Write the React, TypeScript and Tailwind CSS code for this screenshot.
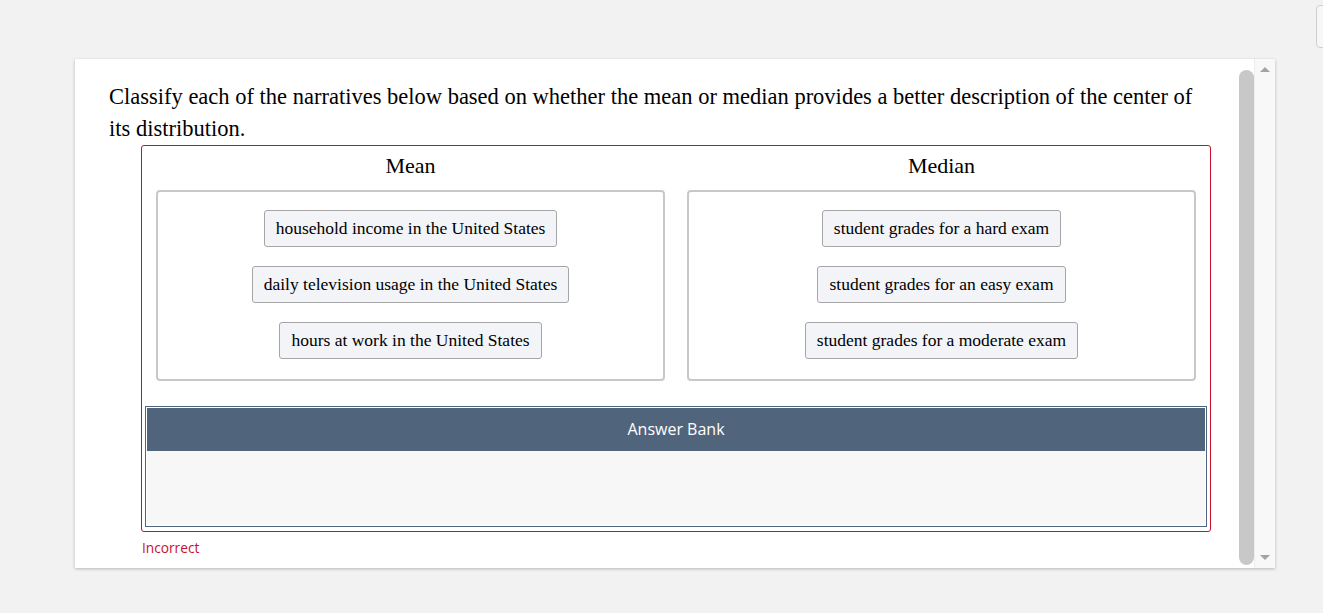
import React from "react";

const serif = { fontFamily: '"Liberation Serif", "Times New Roman", serif' };

function Chip({ text }: { text: string }) {
  return (
    <div className="h-[37px] flex items-center px-[11px] bg-[#f3f4f8] border border-[#a6a6a6] rounded-[3px] text-[17.5px] text-black leading-none">
      {text}
    </div>
  );
}

function Column({ title, items }: { title: string; items: string[] }) {
  return (
    <div className="flex flex-col w-[509px]">
      <div className="h-[44px] flex items-start justify-center pt-[6px] leading-[28px] text-[22px] text-black">{title}</div>
      <div className="h-[191px] border-2 border-[#c8c8c8] rounded-[4px] flex flex-col items-center pt-[18px] gap-[19px]">
        {items.map((t) => (
          <Chip key={t} text={t} />
        ))}
      </div>
    </div>
  );
}

export default function App() {
  return (
    <div className="w-[1323px] h-[613px] bg-[#f2f2f2] relative overflow-hidden">
      <div className="absolute left-[1316px] top-[5px] w-[20px] h-[43px] border border-[#cfcfcf] rounded-[4px] bg-[#f7f7f7]" />
      <div className="pt-[59px] pl-[75px]">
        <div className="w-[1200px] h-[509px] bg-white shadow-[0_1px_3px_rgba(0,0,0,0.25)] flex">
          <div className="flex-1 pl-[34px] pt-[22px]" style={serif}>
            <p className="text-[22.5px] leading-[32px] text-black w-[1095px]">
              Classify each of the narratives below based on whether the mean or median provides a better description of the center of its distribution.
            </p>
            <div className="ml-[32px] w-[1070px] h-[387px] border border-[#c8102e] rounded-[3px] flex flex-col">
              <div className="flex gap-[22px] px-[14px]">
                <Column
                  title="Mean"
                  items={[
                    "household income in the United States",
                    "daily television usage in the United States",
                    "hours at work in the United States",
                  ]}
                />
                <Column
                  title="Median"
                  items={[
                    "student grades for a hard exam",
                    "student grades for an easy exam",
                    "student grades for a moderate exam",
                  ]}
                />
              </div>
              <div
                className="mx-[3px] mt-[25px] h-[121px] border border-[#50647c] p-px flex flex-col"
                style={{ fontFamily: '"Open Sans", "Noto Sans", sans-serif' }}
              >
                <div className="h-[43px] bg-[#50647c] flex items-center justify-center text-white text-[16px] pb-[2px]">
                  Answer Bank
                </div>
                <div className="flex-1 bg-[#f7f7f7]" />
              </div>
            </div>
            <div
              className="ml-[33px] mt-[6px] text-[13.7px] text-[#c8102e]"
              style={{ fontFamily: '"Open Sans", "Noto Sans", sans-serif' }}
            >
              Incorrect
            </div>
          </div>
          <div className="w-[36px] flex">
            <div className="w-[15px] pt-[11px] pb-[3px] flex">
              <div className="w-[14px] flex-1 rounded-full bg-[#c8c8c8]" />
            </div>
            <div className="flex-1 bg-[#f8f8f8] border-l border-[#ededed] flex flex-col items-center justify-between py-[8px]">
              <div className="w-0 h-0 border-l-[5px] border-r-[5px] border-b-[5px] border-l-transparent border-r-transparent border-b-[#a3a3a3]" />
              <div className="w-0 h-0 border-l-[5px] border-r-[5px] border-t-[5px] border-l-transparent border-r-transparent border-t-[#a3a3a3]" />
            </div>
          </div>
        </div>
      </div>
    </div>
  );
}
